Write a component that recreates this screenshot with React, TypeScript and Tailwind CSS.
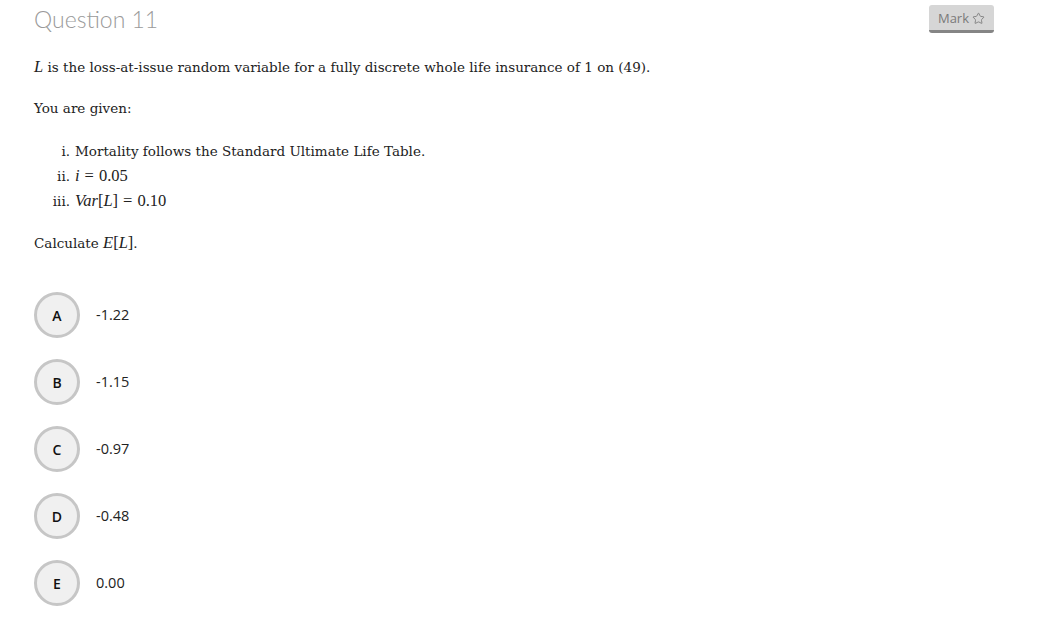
import { Star } from 'lucide-react';

const options = [
  { key: 'A', value: '-1.22' },
  { key: 'B', value: '-1.15' },
  { key: 'C', value: '-0.97' },
  { key: 'D', value: '-0.48' },
  { key: 'E', value: '0.00' },
];

const serif = 'font-["DejaVu_Serif","Liberation_Serif",serif]';
const math = 'font-["Liberation_Serif","DejaVu_Serif",serif]';

function MathI({ children }: { children: React.ReactNode }) {
  return <span className={`${math} italic text-[16.5px]`}>{children}</span>;
}

function MathR({ children }: { children: React.ReactNode }) {
  return <span className={`${math} text-[16.5px]`}>{children}</span>;
}

function Eq() {
  return <span className={`${math} mx-[5px] text-[16.5px]`}>=</span>;
}

export default function App() {
  return (
    <div className="min-h-screen bg-white px-[34px] text-[#222]">
      <header className="flex items-start justify-between pt-[5px]">
        <h1 className='font-["Lato","Open_Sans",sans-serif] text-[23px] font-light leading-[28px] text-[#9a9a9a]'>
          Question 11
        </h1>
        <button className='mr-[22px] flex h-[28px] items-center gap-[3px] rounded-[3px] border-b-[3px] border-[#858585] bg-[#d6d6d6] px-[9px] pt-[2px] font-["Open_Sans",sans-serif] text-[13px] text-[#7a7a7a]'>
          Mark
          <Star size={13} strokeWidth={1.6} />
        </button>
      </header>

      <div className={`${serif} text-[13.5px] leading-[20px]`}>
        <p className="mt-[24px]">
          <MathI>L</MathI> is the loss-at-issue random variable for a fully discrete whole life insurance of 1 on (49).
        </p>
        <p className="mt-[21px]">You are given:</p>

        <div className="mt-[23px] grid grid-cols-[36px_1fr] gap-y-[5px]">
          <span className="text-right">i.</span>
          <span className="pl-[5px]">Mortality follows the Standard Ultimate Life Table.</span>
          <span className="text-right">ii.</span>
          <span className="pl-[5px]">
            <MathI>i</MathI>
            <Eq />
            <MathR>0.05</MathR>
          </span>
          <span className="text-right">iii.</span>
          <span className="pl-[5px]">
            <MathI>Var</MathI>
            <MathR>[</MathR>
            <MathI>L</MathI>
            <MathR>]</MathR>
            <Eq />
            <MathR>0.10</MathR>
          </span>
        </div>

        <p className="mt-[22px]">
          Calculate <MathI>E</MathI>
          <MathR>[</MathR>
          <MathI>L</MathI>
          <MathR>]</MathR>.
        </p>
      </div>

      <ul className="mt-[39px] flex flex-col gap-[21px]">
        {options.map((o) => (
          <li key={o.key} className="flex items-center">
            <span className='flex h-[46px] w-[46px] items-center justify-center rounded-full border-[3px] border-[#c6c6c6] bg-[#f0f0f0] font-["Open_Sans",sans-serif] text-[14px] font-semibold text-[#111]'>
              {o.key}
            </span>
            <span className='ml-[16px] font-["Open_Sans",sans-serif] text-[14.5px] text-[#222]'>{o.value}</span>
          </li>
        ))}
      </ul>
    </div>
  );
}
